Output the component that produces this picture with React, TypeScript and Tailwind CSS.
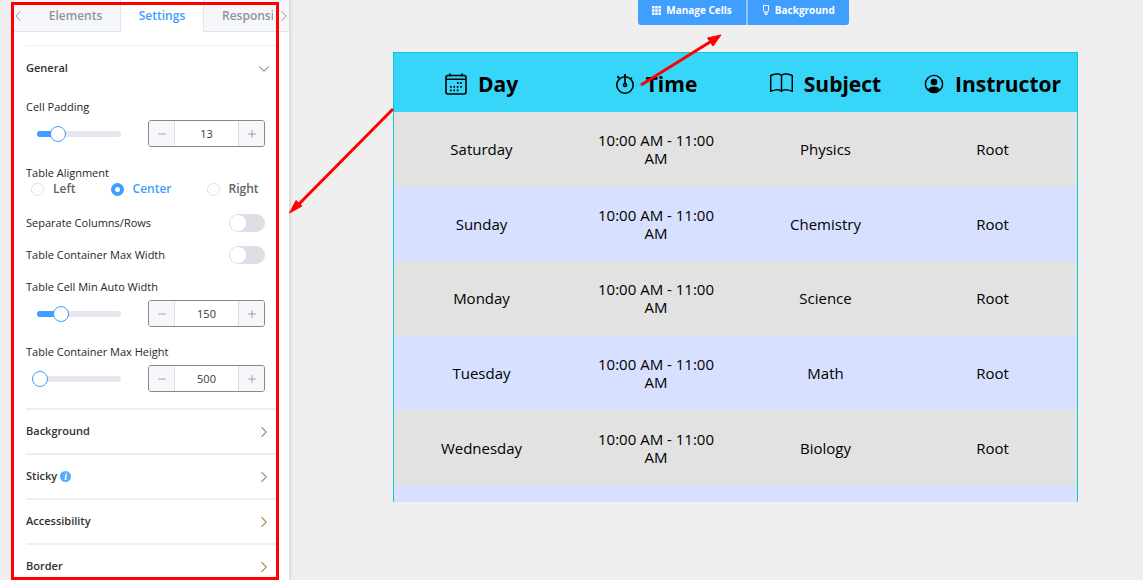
import { useState } from 'react'
import type { ReactNode } from 'react'
import { BsBook } from 'react-icons/bs'
import { ChevronDown, ChevronLeft, ChevronRight, Minus, Plus } from 'lucide-react'

type SliderFieldProps = {
  id: string
  label: string
  initial: number
  min: number
  max: number
}

const days = [
  { day: 'Saturday', subject: 'Physics' },
  { day: 'Sunday', subject: 'Chemistry' },
  { day: 'Monday', subject: 'Science' },
  { day: 'Tuesday', subject: 'Math' },
  { day: 'Wednesday', subject: 'Biology' },
]

const sections = [
  { name: 'Background', info: false, chevron: 'text-[#b08d62]' },
  { name: 'Sticky', info: true, chevron: 'text-[#7d9cb8]' },
  { name: 'Accessibility', info: false, chevron: 'text-[#b08d62]' },
  { name: 'Border', info: false, chevron: 'text-[#b08d62]' },
]

function CalendarIcon() {
  return (
    <svg viewBox="0 0 22 22" className="h-[22px] w-[22px]" fill="none" stroke="currentColor" strokeWidth="1.6">
      <rect x="1" y="2.5" width="20" height="18.5" rx="2" />
      <path d="M1 6.300h20M5 .5v3M17 .5v3" />
      <path
        d="M12 10h1.600M15 10h1.600M5 13.800h1.600M8.400 13.800H10M11.800 13.800h1.600M15.200 13.800h1.600M5 17.400h1.600M8.400 17.400H10M11.800 17.400h1.600"
        strokeWidth="1.8"
      />
    </svg>
  )
}

function StopwatchIcon() {
  return (
    <svg viewBox="0 0 20 22" className="h-[22px] w-5" fill="none" stroke="currentColor" strokeWidth="1.6">
      <circle cx="10" cy="12" r="8.2" />
      <path d="M10 1v9.500M9 2.200h2M2.600 3.800l2 1.800M3.600 3L2.300 4.500M16 5.600l1-1" />
      <circle cx="10" cy="12" r="1.5" />
    </svg>
  )
}

function PersonIcon() {
  return (
    <svg viewBox="0 0 20 20" className="h-5 w-5" fill="currentColor">
      <circle cx="10" cy="10" r="8.6" fill="none" stroke="currentColor" strokeWidth="1.4" />
      <circle cx="10" cy="8" r="3.3" />
      <path d="M4 16c1.200-2.400 3.300-3.400 6-3.400s4.800 1 6 3.400c-1.500 1.800-3.600 2.700-6 2.700S5.500 17.800 4 16z" />
    </svg>
  )
}

function GridIcon() {
  return (
    <svg viewBox="0 0 9 9" className="h-[9px] w-[9px]" fill="currentColor">
      <path d="M0 0h2.500v2.500H0zM3.250 0h2.500v2.500h-2.500zM6.500 0H9v2.500H6.500zM0 3.250h2.500v2.500H0zM3.250 3.250h2.500v2.500h-2.500zM6.500 3.250H9v2.500H6.500zM0 6.500h2.500V9H0zM3.250 6.500h2.500V9h-2.500zM6.500 6.500H9V9H6.500z" />
    </svg>
  )
}

function BrushIcon() {
  return (
    <svg viewBox="0 0 8 10" className="h-[10px] w-2" fill="none" stroke="currentColor">
      <path d="M1.500.5h5v5L5.500 7h-3l-1-1.500zM3 7v2.500h2V7" />
    </svg>
  )
}

function SliderField({ id, label, initial, min, max }: SliderFieldProps) {
  const [value, setValue] = useState(initial)
  const percent = ((value - min) / (max - min)) * 100

  return (
    <div>
      <label htmlFor={id} className="block h-4 text-[11px] leading-4 text-[#23282d]">{label}</label>
      <div className="mt-[5px] flex items-center justify-between">
        <div className="ml-[3px] grid w-[100px] items-center">
          <div className="col-start-1 row-start-1 mx-2 h-1.5 overflow-hidden rounded-full bg-[#e4e7ed]">
            <div className="h-full bg-[#409eff]" style={{ width: `${percent}%` }} />
          </div>
          <input
            type="range"
            aria-label={label}
            min={min}
            max={max}
            value={value}
            onChange={(e) => setValue(Number(e.target.value))}
            className="col-start-1 row-start-1 h-4 w-full appearance-none bg-transparent [&::-webkit-slider-thumb]:h-4 [&::-webkit-slider-thumb]:w-4 [&::-webkit-slider-thumb]:appearance-none [&::-webkit-slider-thumb]:rounded-full [&::-webkit-slider-thumb]:border [&::-webkit-slider-thumb]:border-solid [&::-webkit-slider-thumb]:border-[#409eff] [&::-webkit-slider-thumb]:bg-white"
          />
        </div>
        <div className="flex h-[27px] w-[117px] overflow-hidden rounded-[3px] border border-[#85878c] text-[#85888e]">
          <button type="button" aria-label="Decrease" onClick={() => setValue(value - 1)} className="flex w-[26px] items-center justify-center border-r border-[#dcdfe6] bg-[#f5f7fa]">
            <Minus size={12} strokeWidth={1.5} />
          </button>
          <input
            id={id}
            type="text"
            value={value}
            onChange={(e) => setValue(Number(e.target.value) || 0)}
            className="min-w-0 flex-1 bg-white pt-0.5 text-center text-[11px] text-[#32373c]"
          />
          <button type="button" aria-label="Increase" onClick={() => setValue(value + 1)} className="flex w-[26px] items-center justify-center border-l border-[#dcdfe6] bg-[#f5f7fa]">
            <Plus size={12} strokeWidth={1.5} />
          </button>
        </div>
      </div>
    </div>
  )
}

function SwitchField({ id, label }: { id: string; label: string }) {
  return (
    <div className="flex h-[18px] items-center justify-between">
      <label htmlFor={id} className="text-[11px] text-[#23282d]">{label}</label>
      <input
        id={id}
        type="checkbox"
        role="switch"
        className="h-[18px] w-9 appearance-none rounded-full bg-[#dcdfe6] p-px before:block before:h-4 before:w-4 before:rounded-full before:bg-white checked:bg-[#409eff] checked:before:ml-[18px]"
      />
    </div>
  )
}

function AlignmentField() {
  const [align, setAlign] = useState('Center')

  return (
    <fieldset>
      <legend className="h-4 text-[11px] leading-4 text-[#23282d]">Table Alignment</legend>
      <div className="flex h-4 items-center gap-[35px] pl-[5px]">
        {['Left', 'Center', 'Right'].map((name) => (
          <label
            key={name}
            className={`flex items-center gap-[9px] text-xs font-semibold ${align === name ? 'text-[#409eff]' : 'text-[#606266]'}`}
          >
            <input
              type="radio"
              name="align"
              checked={align === name}
              onChange={() => setAlign(name)}
              className="h-[13px] w-[13px] appearance-none rounded-full border border-[#dcdfe6] bg-white checked:border-4 checked:border-[#409eff]"
            />
            {name}
          </label>
        ))}
      </div>
    </fieldset>
  )
}

function Sidebar() {
  return (
    <aside className="ml-[13px] w-[276px] shrink-0 overflow-hidden bg-white shadow-[1px_0_4px_rgba(0,0,0,0.15)]">
      <nav className="flex h-8 text-xs font-semibold text-[#909399]">
        <button type="button" aria-label="Previous tab" className="flex w-[10px] items-center justify-center border-b border-[#dfe4ed] bg-[#f5f7fa]">
          <ChevronLeft size={18} strokeWidth={1.3} className="shrink-0" />
        </button>
        <button type="button" className="w-[98px] border-r border-b border-[#dfe4ed] bg-[#f5f7fa] pl-2">Elements</button>
        <button type="button" className="w-[82px] bg-white text-[#409eff]">Settings</button>
        <button type="button" className="w-[76px] border-b border-l border-[#dfe4ed] bg-[#f5f7fa] pr-[6px] pl-[18px] text-left">
          <span className="block overflow-hidden">Responsive</span>
        </button>
        <button type="button" aria-label="Next tab" className="flex w-[10px] items-center justify-center border-b border-[#dfe4ed] bg-[#f5f7fa]">
          <ChevronRight size={18} strokeWidth={1.3} className="shrink-0" />
        </button>
      </nav>
      <div className="mt-[13px] mr-3 ml-[13px] border-t border-[#ebeef5]">
        <button type="button" className="flex h-[45px] w-full items-center justify-between pr-1 text-[11px] font-semibold text-[#303133]">
          General
          <ChevronDown size={18} strokeWidth={1.3} className="text-[#606266]" />
        </button>
        <div className="mt-2 pr-3 pb-4">
          <SliderField id="cell-padding" label="Cell Padding" initial={13} min={0} max={52} />
          <div className="mt-[18px] mb-[17px]">
            <AlignmentField />
          </div>
          <SwitchField id="separate" label="Separate Columns/Rows" />
          <div className="mt-[14px] mb-[15px]">
            <SwitchField id="max-width" label="Table Container Max Width" />
          </div>
          <SliderField id="cell-width" label="Table Cell Min Auto Width" initial={150} min={8} max={508} />
          <div className="mt-[17px]">
            <SliderField id="max-height" label="Table Container Max Height" initial={500} min={430} max={2430} />
          </div>
        </div>
        {sections.map((section) => (
          <button
            key={section.name}
            type="button"
            className="flex h-[45px] w-full items-center justify-between border-t-2 border-[#ebeef5] pr-1 text-[11px] font-semibold text-[#303133]"
          >
            <span className="flex items-center gap-[3px]">
              {section.name}
              {section.info && (
                <span className="flex h-[11px] w-[11px] items-center justify-center rounded-full bg-[#54aeff] font-['Liberation_Serif',serif] text-[10px] leading-none font-bold text-white italic">i</span>
              )}
            </span>
            <ChevronRight size={18} strokeWidth={1.5} className={section.chevron} />
          </button>
        ))}
      </div>
    </aside>
  )
}

function HeadCell({ icon, children }: { icon: ReactNode; children: ReactNode }) {
  return (
    <th className="h-[59px] p-0 pt-0.5">
      <span className="flex items-center justify-center gap-[11px] whitespace-nowrap">
        {icon}
        {children}
      </span>
    </th>
  )
}

function ScheduleTable() {
  return (
    <div className="max-h-[450px] overflow-hidden border border-b-0 border-[#12c6cf]">
      <table className="h-[449px] w-full table-fixed border-collapse text-center text-[15px] leading-[18px] text-black">
        <colgroup>
          <col className="w-[175px]" />
          <col className="w-[174px]" />
          <col className="w-[165px]" />
          <col className="w-[169px]" />
        </colgroup>
        <thead className="bg-[#37d5f7] text-[21px] font-bold">
          <tr>
            <HeadCell icon={<CalendarIcon />}>Day</HeadCell>
            <HeadCell icon={<StopwatchIcon />}>Time</HeadCell>
            <HeadCell icon={<BsBook size={23} />}>Subject</HeadCell>
            <HeadCell icon={<PersonIcon />}>Instructor</HeadCell>
          </tr>
        </thead>
        <tbody>
          {days.map((row) => (
            <tr key={row.day} className="odd:bg-[#e2e2e2] even:bg-[#d7e1ff]">
              <td className="px-5">{row.day}</td>
              <td className="px-5">10:00 AM - 11:00 AM</td>
              <td className="px-5">{row.subject}</td>
              <td className="px-5">Root</td>
            </tr>
          ))}
          <tr className="h-[17px] bg-[#d7e1ff]">
            <td colSpan={4} />
          </tr>
        </tbody>
      </table>
    </div>
  )
}

export default function App() {
  return (
    <div className="relative flex h-screen overflow-hidden bg-[#efefef] font-['Open_Sans',sans-serif]">
      <Sidebar />
      <main className="min-w-0 flex-1 pr-[65px] pl-[104px]">
        <div className="mb-[27px] flex justify-center pl-4 text-[10px] font-bold text-white">
          <button type="button" className="flex h-[25px] items-center gap-[5px] rounded-bl-[3px] border-r-2 border-[#8cc5ff] bg-[#409eff] px-[14px] pb-[5px]">
            <GridIcon />
            Manage Cells
          </button>
          <button type="button" className="flex h-[25px] items-center gap-[5px] rounded-br-[3px] bg-[#409eff] px-[14px] pb-[5px]">
            <BrushIcon />
            Background
          </button>
        </div>
        <ScheduleTable />
      </main>
      <div className="pointer-events-none absolute top-[2px] bottom-0 left-[11px] w-[268px] border-3 border-[#fe0000]" />
      <svg className="pointer-events-none absolute top-0 left-0 h-[220px] w-[730px]" fill="#fe0000" stroke="#fe0000">
        <path d="M393 109L299 204M641 85L710 42" strokeWidth="3" fill="none" />
        <path d="M289.500 213l6.500-12.500 6 5.500zM721 35l-8 11-5.500-8z" strokeWidth="1" />
      </svg>
    </div>
  )
}
